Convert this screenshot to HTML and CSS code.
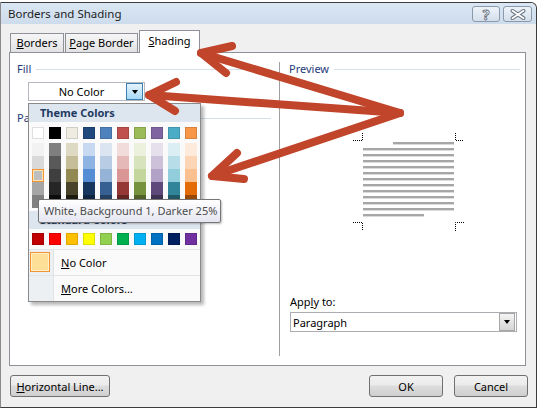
FILE: index.html
```html
<!DOCTYPE html>
<html lang="en">
<head>
    <meta charset="UTF-8">
    <meta name="viewport" content="width=device-width, initial-scale=1.0">
    <title>Borders and Shading</title>
    <link rel="stylesheet" href="styles.css">
</head>
<body>

    <div class="window">
        <div class="titlebar">
            <span class="title">Borders and Shading</span>
            <span class="cap-btn help">?</span>
            <span class="cap-btn close">
                <svg width="16" height="11" viewBox="0 0 16 11">
                    <path d="M2.5 1.8 L13.5 9.2 M13.5 1.8 L2.5 9.2" stroke="#6b7584" stroke-width="3.8" stroke-linecap="round"/>
                    <path d="M2.5 1.8 L13.5 9.2 M13.5 1.8 L2.5 9.2" stroke="#ffffff" stroke-width="1.8" stroke-linecap="round"/>
                </svg>
            </span>
        </div>

        <div class="client">
            <div class="tabs">
                <span class="tab tab-borders"><u>B</u>orders</span>
                <span class="tab tab-page"><u>P</u>age Border</span>
                <span class="tab active"><u>S</u>hading</span>
            </div>

            <div class="panel">
                <div class="left">
                    <div class="group-head"><span>Fill</span><i class="rule"></i></div>
                    <div class="select">
                        <span class="select-text">No Color</span>
                        <span class="select-btn hot"><i class="caret"></i></span>
                    </div>
                    <div class="group-head patterns"><span>Patterns</span><i class="rule"></i></div>

                    <!-- colour picker dropdown, open over the fill group -->
                    <div class="popup">
                        <div class="popup-head">Theme Colors</div>
                        <div class="swatch-row">
                            <i class="sw" style="background:#ffffff"></i>
                            <i class="sw" style="background:#000000"></i>
                            <i class="sw" style="background:#eeece1"></i>
                            <i class="sw" style="background:#1f497d"></i>
                            <i class="sw" style="background:#4f81bd"></i>
                            <i class="sw" style="background:#c0504d"></i>
                            <i class="sw" style="background:#9bbb59"></i>
                            <i class="sw" style="background:#8064a2"></i>
                            <i class="sw" style="background:#4bacc6"></i>
                            <i class="sw" style="background:#f79646"></i>
                        </div>
                        <div class="shade-row">
                            <div class="shade-col">
                                <i style="background:#f2f2f2"></i><i style="background:#d9d9d9"></i><i class="picked" style="background:#bfbfbf"></i><i style="background:#a6a6a6"></i><i style="background:#808080"></i>
                            </div>
                            <div class="shade-col">
                                <i style="background:#7f7f7f"></i><i style="background:#595959"></i><i style="background:#3f3f3f"></i><i style="background:#262626"></i><i style="background:#0c0c0c"></i>
                            </div>
                            <div class="shade-col">
                                <i style="background:#ddd9c3"></i><i style="background:#c4bd97"></i><i style="background:#938953"></i><i style="background:#494429"></i><i style="background:#1d1b10"></i>
                            </div>
                            <div class="shade-col">
                                <i style="background:#c6d9f0"></i><i style="background:#8db3e2"></i><i style="background:#548dd4"></i><i style="background:#17365d"></i><i style="background:#0f243e"></i>
                            </div>
                            <div class="shade-col">
                                <i style="background:#dbe5f1"></i><i style="background:#b8cce4"></i><i style="background:#95b3d7"></i><i style="background:#366092"></i><i style="background:#244061"></i>
                            </div>
                            <div class="shade-col">
                                <i style="background:#f2dcdb"></i><i style="background:#e5b9b7"></i><i style="background:#d99694"></i><i style="background:#953734"></i><i style="background:#632423"></i>
                            </div>
                            <div class="shade-col">
                                <i style="background:#ebf1dd"></i><i style="background:#d7e3bc"></i><i style="background:#c3d69b"></i><i style="background:#76923c"></i><i style="background:#4f6128"></i>
                            </div>
                            <div class="shade-col">
                                <i style="background:#e5e0ec"></i><i style="background:#ccc1d9"></i><i style="background:#b2a2c7"></i><i style="background:#5f497a"></i><i style="background:#3f3151"></i>
                            </div>
                            <div class="shade-col">
                                <i style="background:#dbeef3"></i><i style="background:#b7dde8"></i><i style="background:#92cddc"></i><i style="background:#31859b"></i><i style="background:#205867"></i>
                            </div>
                            <div class="shade-col">
                                <i style="background:#fdeada"></i><i style="background:#fbd5b5"></i><i style="background:#fac08f"></i><i style="background:#e36c09"></i><i style="background:#974806"></i>
                            </div>
                        </div>
                        <div class="popup-head std">Standard Colors</div>
                        <div class="swatch-row">
                            <i class="sw" style="background:#c00000"></i>
                            <i class="sw" style="background:#ff0000"></i>
                            <i class="sw" style="background:#ffc000"></i>
                            <i class="sw" style="background:#ffff00"></i>
                            <i class="sw" style="background:#92d050"></i>
                            <i class="sw" style="background:#00b050"></i>
                            <i class="sw" style="background:#00b0f0"></i>
                            <i class="sw" style="background:#0070c0"></i>
                            <i class="sw" style="background:#002060"></i>
                            <i class="sw" style="background:#7030a0"></i>
                        </div>
                        <div class="menu-item first">
                            <span class="gutter"><i class="none-swatch"></i></span>
                            <span class="label"><u>N</u>o Color</span>
                        </div>
                        <div class="menu-item">
                            <span class="gutter"></span>
                            <span class="label"><u>M</u>ore Colors...</span>
                        </div>
                    </div>

                    <div class="tooltip">White, Background 1, Darker 25%</div>
                </div>

                <div class="divider"></div>

                <div class="right">
                    <div class="group-head preview-head"><span>Preview</span><i class="rule"></i></div>
                    <svg class="preview" width="111" height="98" viewBox="0 0 111 98">
                        <g fill="#a6a6a6">
                            <rect x="40" y="9" width="61" height="2.4"/>
                            <rect x="10" y="15" width="91" height="2.4"/>
                            <rect x="10" y="21" width="91" height="2.4"/>
                            <rect x="10" y="27" width="91" height="2.4"/>
                            <rect x="10" y="33" width="91" height="2.4"/>
                            <rect x="10" y="39" width="91" height="2.4"/>
                            <rect x="10" y="45" width="91" height="2.4"/>
                            <rect x="10" y="51" width="91" height="2.4"/>
                            <rect x="10" y="57" width="91" height="2.4"/>
                            <rect x="10" y="63" width="91" height="2.4"/>
                            <rect x="10" y="69" width="91" height="2.4"/>
                            <rect x="10" y="75" width="91" height="2.4"/>
                            <rect x="10" y="81" width="61" height="2.4"/>
                        </g>
                        <g stroke="#000" stroke-width="1" stroke-dasharray="1 1" fill="none">
                            <path d="M0 7.5 H9.5 V0"/>
                            <path d="M102.5 0 V7.5 H111"/>
                            <path d="M0 89.5 H9.5 V98"/>
                            <path d="M111 89.5 H102.5 V98"/>
                        </g>
                    </svg>
                    <div class="apply-label">App<u>l</u>y to:</div>
                    <div class="combo">
                        <span class="combo-text">Paragraph</span>
                        <span class="combo-btn"><i class="caret"></i></span>
                    </div>
                </div>
            </div>

            <div class="footer">
                <button class="button wide"><u>H</u>orizontal Line...</button>
                <div class="footer-right">
                    <button class="button">OK</button>
                    <button class="button">Cancel</button>
                </div>
            </div>
        </div>
    </div>

    <!-- annotation arrows drawn over the screenshot -->
    <svg class="arrows" width="538" height="413" viewBox="0 0 538 413">
        <g stroke="#c1452b" stroke-width="8" stroke-linecap="round" stroke-linejoin="round" fill="none">
            <path d="M400 113 L201 53"/>
            <path d="M232 46 L201 53 L226 73"/>
            <path d="M400 113 L149 95"/>
            <path d="M176 82 L149 95 L175 111"/>
            <path d="M400 113 L212 176"/>
            <path d="M237 153 L212 176 L244 179"/>
        </g>
    </svg>

</body>
</html>
```

FILE: styles.css
```css
body {
    margin: 0;
    width: 538px;
    height: 413px;
    background-color: #ffffff;
    font-family: "Segoe UI", "Noto Sans", sans-serif;
    font-size: 11px;
    color: #000000;
    position: relative;
    overflow: hidden;
}

.window {
    margin-top: 2px;
    width: 535px;
    height: 404px;
    border: 1px solid #3c3c3c;
    border-left-color: #8a8a8a;
    border-radius: 0 6px 0 0;
    background-color: #f0f0f0;
    display: flex;
    flex-direction: column;
}

/* title bar */
.titlebar {
    height: 21px;
    display: flex;
    align-items: flex-start;
    padding: 0 4px 0 7px;
    background: linear-gradient(#dae6f3, #cddcec);
    border-radius: 0 6px 0 0;
}

.title {
    margin-top: 3px;
    font-size: 11.5px;
    color: #1e1e1e;
    margin-right: auto;
}

.cap-btn {
    margin-top: 3px;
    height: 14px;
    border: 1px solid #8c99ab;
    border-radius: 3px;
    background: linear-gradient(#eef3f9, #d4dfec);
    display: flex;
    align-items: center;
    justify-content: center;
}

.help {
    width: 26px;
    font-weight: bold;
    font-size: 14px;
    color: #ffffff;
    -webkit-text-stroke: 0.8px #5d6775;
}

.close {
    width: 27px;
    margin-left: 3px;
}

/* dialog client area */
.client {
    flex: 1;
    padding: 6px 8px 0 8px;
    display: flex;
    flex-direction: column;
}

.tabs {
    height: 22px;
    display: flex;
    align-items: flex-end;
    gap: 1px;
    padding-left: 1px;
}

.tab {
    box-sizing: border-box;
    height: 19px;
    line-height: 17px;
    text-align: center;
    white-space: nowrap;
    border: 1px solid #8e9197;
    border-bottom: none;
    background: linear-gradient(#f6f6f6, #e2e2e2);
}

.tab-borders {
    width: 54px;
}

.tab-page {
    width: 73px;
}

.tab.active {
    height: 23px;
    line-height: 19px;
    margin-bottom: -1px;
    width: 61px;
    background: #ffffff;
    position: relative;
    z-index: 1;
}

.panel {
    height: 312px;
    margin-right: 2px;
    border: 1px solid #8e9197;
    background-color: #ffffff;
    display: flex;
}

.left {
    width: 269px;
    position: relative;
}

.divider {
    width: 1px;
    margin: 9px 0;
    background-color: #a0a0a0;
}

.right {
    flex: 1;
    display: flex;
    flex-direction: column;
    padding-bottom: 33px;
}

.group-head {
    margin-top: 8px;
    height: 15px;
    display: flex;
    align-items: center;
    padding: 0 8px 0 7px;
    color: #1d3a7a;
    line-height: 15px;
}

.rule {
    flex: 1;
    height: 1px;
    margin-left: 5px;
    margin-top: 1px;
    background-color: #d5dfe5;
}

.preview-head {
    padding: 0 5px 0 9px;
}

.patterns {
    margin-top: 9px;
}

/* fill dropdown */
.select {
    margin: 6px 0 0 18px;
    width: 115px;
    height: 17px;
    border: 1px solid #b4b8c0;
    display: flex;
    align-items: center;
}

.select-text {
    flex: 1;
    text-align: center;
    padding-left: 8px;
}

.select-btn {
    width: 15px;
    height: 15px;
    margin-right: 1px;
    border: 1px solid #3c7fb1;
    background: linear-gradient(#e5f4fc, #a7d9f5);
    display: flex;
    align-items: center;
    justify-content: center;
}

.caret {
    width: 0;
    height: 0;
    border-left: 3.5px solid transparent;
    border-right: 3.5px solid transparent;
    border-top: 4px solid #000000;
}

/* colour picker popup */
.popup {
    position: absolute;
    left: 18px;
    top: 50px;
    width: 171px;
    height: 197px;
    border: 1px solid #8a8a8a;
    background-color: #fafafa;
    box-shadow: 3px 3px 3px rgba(0, 0, 0, 0.28);
    z-index: 2;
}

.popup-head {
    height: 18px;
    line-height: 18px;
    padding-left: 11px;
    background-color: #dde6ee;
    color: #1e3a62;
    font-weight: bold;
}

.popup-head.std {
    margin-top: 3px;
}

.swatch-row {
    display: flex;
    gap: 5px;
    padding-left: 3px;
    margin-top: 5px;
}

.popup-head.std + .swatch-row {
    margin-top: 4px;
}

.sw {
    width: 12px;
    height: 12px;
    box-shadow: inset 0 0 0 1px rgba(0, 0, 0, 0.13);
}

.shade-row {
    display: flex;
    gap: 5px;
    padding-left: 3px;
    margin-top: 4px;
}

.shade-col {
    width: 12px;
    display: flex;
    flex-direction: column;
    box-shadow: inset 0 0 0 1px rgba(0, 0, 0, 0.08);
}

.shade-col i {
    height: 13px;
}

.shade-col i.picked {
    box-shadow: inset 0 0 0 1px #f29436, inset 0 0 0 2px #fde4b0;
}

.menu-item {
    height: 25px;
    display: flex;
    border-top: 1px solid #e3e4e6;
}

.menu-item.first {
    margin-top: 4px;
}

.gutter {
    width: 24px;
    background-color: #edf0f2;
    border-right: 1px solid #e0e2e4;
}

.none-swatch {
    display: block;
    width: 18px;
    height: 18px;
    margin: 2px 0 0 1px;
    border: 1px solid #f29436;
    background-color: #fddf97;
    box-shadow: inset 0 0 0 1px #fff0c8;
}

.menu-item .label {
    padding-left: 7px;
    line-height: 25px;
}

/* hover tooltip */
.tooltip {
    position: absolute;
    left: 28px;
    top: 146px;
    width: 176px;
    height: 22px;
    line-height: 21px;
    padding-left: 5px;
    border: 1px solid #767676;
    border-radius: 2px;
    background: linear-gradient(#ffffff, #e4e5f0);
    color: #4c4c4c;
    box-shadow: 1px 1px 2px rgba(0, 0, 0, 0.25);
    z-index: 3;
    white-space: nowrap;
}

/* preview */
.preview {
    display: block;
    margin: 57px 0 0 73px;
}

.apply-label {
    margin-top: auto;
    padding-left: 10px;
    height: 15px;
    line-height: 15px;
}

.combo {
    margin: 3px 0 0 10px;
    width: 225px;
    height: 18px;
    border: 1px solid #abadb3;
    display: flex;
    align-items: center;
}

.combo-text {
    flex: 1;
    padding-left: 2px;
}

.combo-btn {
    width: 14px;
    height: 16px;
    margin-right: 1px;
    border: 1px solid #a6a6a6;
    background: linear-gradient(#f4f4f4, #d6d6d6);
    display: flex;
    align-items: center;
    justify-content: center;
}

/* footer buttons */
.footer {
    margin-top: 9px;
    display: flex;
    justify-content: space-between;
}

.footer-right {
    display: flex;
    gap: 11px;
}

.button {
    width: 74px;
    height: 22px;
    padding: 0;
    border: 1px solid #707070;
    border-radius: 3px;
    background: linear-gradient(#f2f2f2 0%, #ebebeb 45%, #dddddd 50%, #cfcfcf 100%);
    font-family: "Segoe UI", "Noto Sans", sans-serif;
    font-size: 11px;
    color: #000000;
}

.button.wide {
    width: 100px;
    margin-left: 1px;
}

.arrows {
    position: absolute;
    left: 0;
    top: 0;
    pointer-events: none;
    z-index: 10;
}
```
